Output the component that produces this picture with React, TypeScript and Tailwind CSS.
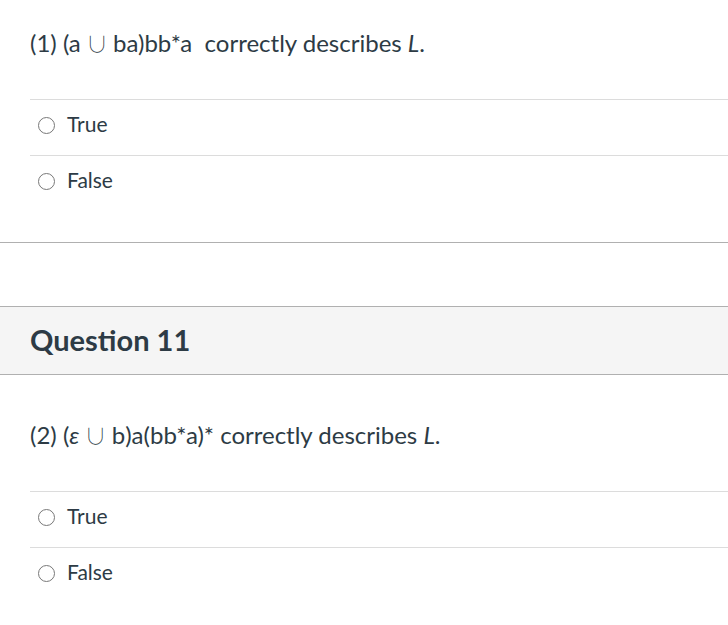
import React from "react";

function Option({ label, border }: { label: string; border?: boolean }) {
  return (
    <label
      className={
        "flex h-[55px] items-center gap-[12px] pl-[8px] pb-[7px] " +
        (border ? "border-t border-[#dcdcdc]" : "")
      }
    >
      <span className="mt-[3px] h-[17px] w-[17px] rounded-full border border-[#787878] bg-white" />
      <span className="text-[21px] leading-[28px] text-[#2d3b45]">{label}</span>
    </label>
  );
}

function Answers() {
  return (
    <div className="ml-[30px]">
      <div className="border-t border-[#dcdcdc]" />
      <Option label="True" />
      <Option label="False" border />
    </div>
  );
}

// thin union sign, Lato has none
function Cup() {
  return (
    <span className="mx-[-1px] font-[family-name:'Noto_Sans_CJK_JP',sans-serif] text-[22px] leading-none font-thin">
      ∪
    </span>
  );
}

export default function App() {
  return (
    <div className="min-h-[625px] bg-white font-[family-name:Lato,'Noto_Sans',sans-serif] text-[#2d3b45]">
      <div className="border-b border-[#b0b0b0] pb-[32px]">
        <p className="whitespace-pre px-[30px] pt-[26px] pb-[40px] text-[24px] leading-[33px]">
          (1) (a <Cup /> ba)bb*a  correctly describes <i>L</i>.
        </p>
        <Answers />
      </div>

      <div className="h-[63px]" />

      <div className="flex h-[69px] items-center border-y border-[#b0b0b0] bg-[#f5f5f5] px-[30px] pb-[2px]">
        <h2 className="text-[29px] font-bold">Question 11</h2>
      </div>

      <div>
        <p className="px-[30px] pt-[43px] pb-[40px] text-[24px] leading-[33px]">
          (2) (<i>ε</i> <Cup /> b)a(bb*a)* correctly describes <i>L</i>.
        </p>
        <Answers />
      </div>
    </div>
  );
}
